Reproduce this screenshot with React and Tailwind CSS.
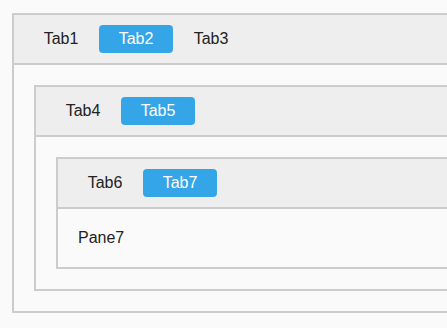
import { useState } from 'react';

function Tabs({ tabs, initial, children }) {
    const [active, setActive] = useState(initial);
    return (
        <div className="border-2 border-[#cccccc] bg-[#fafafa]">
            <div className="h-[50px] flex items-center gap-px px-[10px] bg-[#eeeeee] border-b-2 border-[#cccccc]">
                {tabs.map((t) => (
                    <button
                        key={t}
                        type="button"
                        onClick={() => setActive(t)}
                        className={`h-7 w-[74px] rounded-[4px] text-[16px] leading-7 ${
                            t === active ? 'bg-[#34a6e8] text-white' : 'text-[#222222]'
                        }`}
                    >
                        {t}
                    </button>
                ))}
            </div>
            <div className="p-5">{children}</div>
        </div>
    );
}

export default function App() {
    return (
        <div
            className="w-screen h-screen overflow-hidden bg-[#fafafa] pl-3 pt-[13px]"
            style={{ fontFamily: '"Liberation Sans", Arial, sans-serif' }}
        >
            <div className="w-[540px]">
                <Tabs tabs={['Tab1', 'Tab2', 'Tab3']} initial="Tab2">
                    <Tabs tabs={['Tab4', 'Tab5']} initial="Tab5">
                        <Tabs tabs={['Tab6', 'Tab7']} initial="Tab7">
                            <p className="text-[16px] leading-[18px] text-[#222222]">Pane7</p>
                        </Tabs>
                    </Tabs>
                </Tabs>
            </div>
        </div>
    );
}
